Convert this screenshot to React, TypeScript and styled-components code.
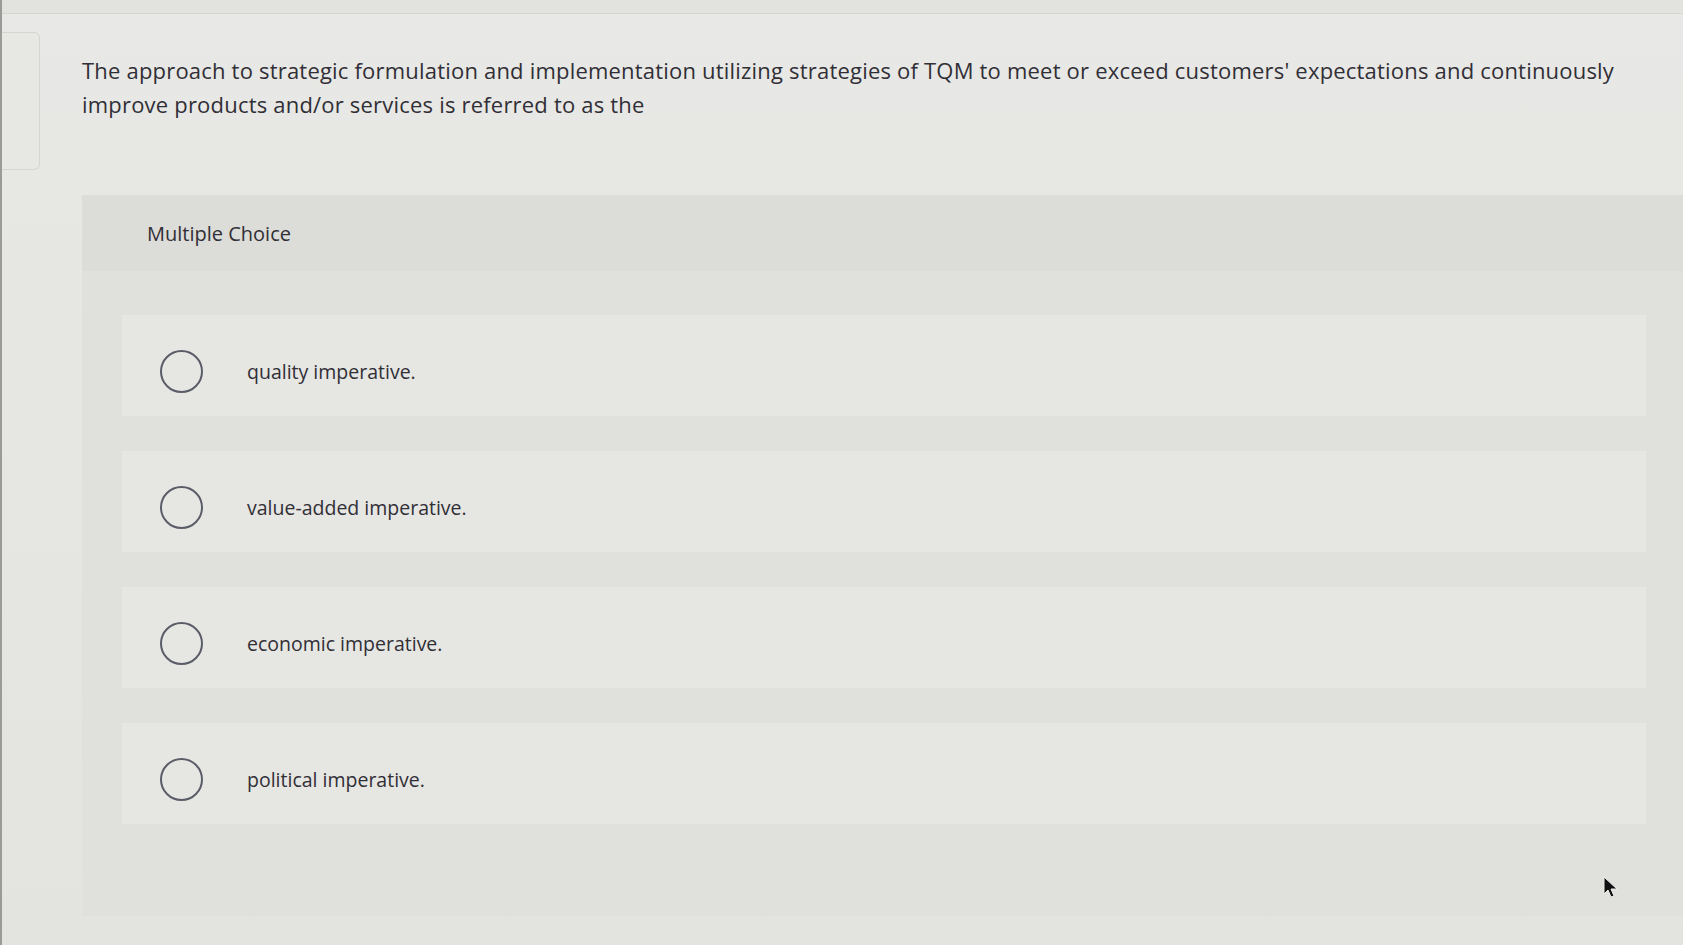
import React from 'react';
import styled, { createGlobalStyle } from 'styled-components';

const GlobalStyle = createGlobalStyle`
  html, body {
    margin: 0;
    padding: 0;
    background: #e6e6e3;
    overflow: hidden;
  }
  body {
    font-family: "Open Sans", "Liberation Sans", sans-serif;
    color: #38363d;
  }
`;

const Page = styled.div`
  position: relative;
  width: 1683px;
  height: 945px;
  background: linear-gradient(180deg, #e8e8e6 0%, #e6e6e3 40%, #e3e3e0 100%);
  overflow: hidden;
  border-left: 2px solid #9a9a98;
  box-sizing: border-box;
`;

const TopStrip = styled.div`
  height: 13px;
  background: #e2e2df;
  border-bottom: 1px solid #d6d6d3;
`;

const Body = styled.div`
  display: flex;
  align-items: flex-start;
`;

const SideTab = styled.div`
  flex: 0 0 38px;
  height: 138px;
  margin-top: 18px;
  border: 1px solid #d4d4d1;
  border-left: none;
  border-radius: 0 6px 6px 0;
  background: #e7e7e4;
  box-sizing: border-box;
`;

const Content = styled.div`
  flex: 1;
  padding-left: 42px;
  display: flex;
  flex-direction: column;
`;

const Question = styled.p`
  margin: 39px 0 0;
  max-width: 1545px;
  font-size: 22px;
  line-height: 34px;
  letter-spacing: 0.2px;
  color: #312f36;
`;

const Panel = styled.section`
  margin-top: 74px;
  margin-right: -40px;
  background: #e0e0dc;
  height: 721px;
  display: flex;
  flex-direction: column;
`;

const PanelHeader = styled.div`
  height: 76px;
  background: #dcdcd8;
  display: flex;
  align-items: center;
  padding-left: 65px;
  font-size: 20px;
  color: #312f36;
`;

const Options = styled.div`
  display: flex;
  flex-direction: column;
  gap: 35px;
  padding: 44px 0 0 40px;
  width: 1524px;
`;

const Option = styled.label`
  height: 101px;
  box-sizing: border-box;
  padding: 12px 0 0 38px;
  background: #e6e6e3;
  display: flex;
  align-items: center;
  cursor: pointer;
`;

const Radio = styled.span`
  width: 39px;
  height: 39px;
  border: 2px solid #5a5c68;
  border-radius: 50%;
  flex: 0 0 auto;
`;

const Label = styled.span`
  margin-left: 44px;
  font-size: 19.5px;
  color: #312f36;
`;

const Cursor = styled.svg`
  position: absolute;
  left: 1601px;
  top: 876px;
`;

const choices = [
  'quality imperative.',
  'value-added imperative.',
  'economic imperative.',
  'political imperative.',
];

const App: React.FC = () => {
  return (
    <Page>
      <GlobalStyle />
      <TopStrip />
      <Body>
        <SideTab />
        <Content>
          <Question>
            The approach to strategic formulation and implementation utilizing strategies of TQM to meet or exceed
            customers' expectations and continuously improve products and/or services is referred to as the
          </Question>
          <Panel>
            <PanelHeader>Multiple Choice</PanelHeader>
            <Options>
              {choices.map((c) => (
                <Option key={c}>
                  <Radio />
                  <Label>{c}</Label>
                </Option>
              ))}
            </Options>
          </Panel>
        </Content>
      </Body>
      <Cursor width="16" height="24" viewBox="0 0 16 24">
        <path d="M1 1 L1 18 L5 14 L8 21 L11 20 L8 13 L14 13 Z" fill="#111" stroke="#eee" strokeWidth="1" />
      </Cursor>
    </Page>
  );
};

export default App;
